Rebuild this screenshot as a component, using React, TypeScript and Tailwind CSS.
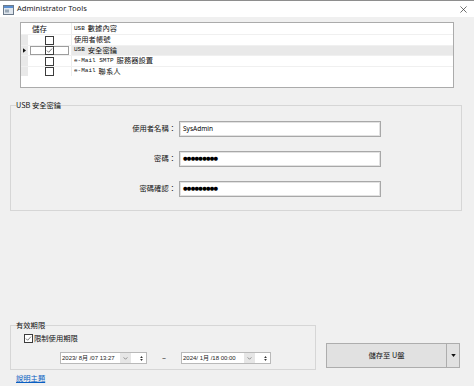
import React from 'react'

const ui = "font-['Noto_Sans','Noto_Sans_CJK_TC',sans-serif]"
const cjk = "font-['Noto_Sans_CJK_TC',sans-serif]"
const mono = "font-['Liberation_Mono','Noto_Sans_CJK_TC',monospace]"
const narrow = "font-['Liberation_Sans','Noto_Sans_CJK_TC',sans-serif]"

type Row = { key: string; latin?: string; text: string; checked?: boolean; selected?: boolean; h: string }

const rows: Row[] = [
  { key: 'acct', text: '使用者帳號', h: 'h-[11px]' },
  { key: 'usb', latin: 'USB', text: '安全密鑰', checked: true, selected: true, h: 'h-[10px]' },
  { key: 'smtp', latin: 'e-Mail SMTP', text: '服務器設置', h: 'h-[11px]' },
  { key: 'contact', latin: 'e-Mail', text: '聯系人', h: 'h-[10px]' },
]

function Check({ checked }: { checked?: boolean }) {
  return (
    <span className="flex h-[9px] w-[9px] items-center justify-center border border-[#3c3c3c] bg-white">
      {checked && (
        <svg viewBox="0 0 9 9" className="h-[7px] w-[7px]">
          <path d="M1.2 4.6 L3.4 6.8 L7.8 2" fill="none" stroke="#555" strokeWidth="1" />
        </svg>
      )}
    </span>
  )
}

function Label({ latin, text }: { latin?: string; text: string }) {
  return (
    <span className="flex items-center gap-[3px] whitespace-nowrap">
      {latin && <span className={`${mono} text-[6px]`}>{latin}</span>}
      <span className={`${cjk} text-[7.3px]`}>{text}</span>
    </span>
  )
}

function DataGrid() {
  return (
    <div className="mx-[20px] mt-[5px] h-[66px] border border-[#ababab] bg-white">
      <div className="flex h-[11px] items-center">
        <div className="w-[7px]" />
        <div className={`${cjk} w-[43px] pl-[4px] text-[7.5px] leading-none`}>儲存</div>
        <div className="flex h-full flex-1 items-center border-l border-[#ececec] pl-[2px]">
          <Label latin="USB" text="數據內容" />
        </div>
      </div>
      {rows.map((r) => (
        <div key={r.key} className={`flex ${r.h} items-stretch border-t border-[#f0f0f0]`}>
          <div className="flex w-[7px] items-center justify-center bg-[#e9e9e9]">
            {r.selected && (
              <svg viewBox="0 0 4 6" className="h-[5px] w-[3px]">
                <path d="M0 0 L4 3 L0 6 Z" fill="#111" />
              </svg>
            )}
          </div>
          <div className="flex w-[43px] items-center justify-center">
            <div
              className={`flex h-full items-center justify-center ${
                r.selected ? 'mx-[2px] w-[40px] border border-[#9d9d9d] bg-white' : 'w-full'
              }`}
            >
              <Check checked={r.checked} />
            </div>
          </div>
          <div
            className={`flex flex-1 items-center border-l border-[#ececec] pl-[2px] leading-none ${
              r.selected ? 'bg-[#e9e9e9]' : ''
            }`}
          >
            <Label latin={r.latin} text={r.text} />
          </div>
        </div>
      ))}
    </div>
  )
}

function Field({ label, value, secret }: { label: string; value: string; secret?: boolean }) {
  return (
    <div className="flex items-center">
      <div className={`${cjk} w-[165px] text-right text-[7.3px] leading-none`}>{label}</div>
      <div className="ml-[3px] flex h-[16px] w-[202px] items-center border border-[#a8a8a8] bg-white pl-[3px] shadow-[inset_0_0_0_1px_#e2e2e2]">
        {secret ? (
          <span className="font-['DejaVu_Sans',sans-serif] text-[5.2px] tracking-[-0.7px] text-black">{value}</span>
        ) : (
          <span className={`${ui} text-[6.5px] text-black`}>{value}</span>
        )}
      </div>
    </div>
  )
}

function DatePicker({ value, w }: { value: string; w: string }) {
  return (
    <div className={`flex h-[12px] ${w} items-center border border-[#b9b9b9] bg-white`}>
      <span className={`${narrow} flex-1 whitespace-nowrap pl-[1px] text-[6px] leading-none text-[#222]`}>{value}</span>
      <span className="flex h-full w-[11px] items-center justify-center bg-[#e6e6e6]">
        <svg viewBox="0 0 6 4" className="h-[3px] w-[5px]">
          <path d="M0.5 0.5 L3 3 L5.5 0.5" fill="none" stroke="#666" strokeWidth="0.9" />
        </svg>
      </span>
      <span className="ml-[6px] flex h-full w-[9px] flex-col items-center justify-center gap-[1px]">
        <svg viewBox="0 0 4 3" className="h-[2px] w-[3px]">
          <path d="M0 3 L2 0 L4 3 Z" fill="#333" />
        </svg>
        <svg viewBox="0 0 4 3" className="h-[2px] w-[3px]">
          <path d="M0 0 L4 0 L2 3 Z" fill="#333" />
        </svg>
      </span>
    </div>
  )
}

export default function App() {
  return (
    <div className={`${ui} flex h-[386px] w-[474px] flex-col overflow-hidden bg-[#f0f0f0] text-[#111]`}>
      <div className="flex h-[17px] shrink-0 items-center border-t border-[#8e8e8e] bg-white">
        <svg viewBox="0 0 11 11" className="ml-[3px] h-[11px] w-[11px]">
          <rect x="0.5" y="1.5" width="10" height="9" fill="#dfe6ee" stroke="#6c7a8a" />
          <rect x="1" y="2" width="9" height="2" fill="#5a8ed0" />
          <rect x="2" y="5.5" width="4" height="3" fill="#9aa8b6" />
        </svg>
        <span className="ml-[3px] text-[7.6px] leading-none text-[#222]">Administrator Tools</span>
        <svg viewBox="0 0 8 8" className="ml-auto mr-[7px] h-[7px] w-[7px]">
          <path d="M0.5 0.5 L7.5 7.5 M7.5 0.5 L0.5 7.5" stroke="#333" strokeWidth="0.8" />
        </svg>
      </div>

      <DataGrid />

      <fieldset className="ml-[10px] mt-[12px] w-[452px] border border-[#d6d6d6]">
        <legend className={`${cjk} ml-[5px] text-[7.3px] leading-[10px]`}>USB 安全密鑰</legend>
        <div className="flex flex-col gap-[14px] pb-[13px] pt-[11px]">
          <Field label="使用者名稱：" value="SysAdmin" />
          <Field label="密碼：" value="●●●●●●●●●" secret />
          <Field label="密碼確認：" value="●●●●●●●●●" secret />
        </div>
      </fieldset>

      <div className="mt-[109px] flex items-end">
        <fieldset className="ml-[10px] w-[306px] border border-[#d6d6d6]">
          <legend className={`${cjk} ml-[5px] text-[7.3px] leading-[10px]`}>有效期限</legend>
          <div className="ml-[13px] mt-[4px] flex h-[9px] items-center gap-[1px]">
            <Check checked />
            <span className={`${cjk} text-[7.3px] leading-none`}>限制使用期限</span>
          </div>
          <div className="ml-[49px] mt-[9px] flex items-center pb-[5px]">
            <DatePicker value="2023/ 8月 /07 13:27" w="w-[87px]" />
            <span className="w-[34px] text-center text-[7px] leading-none">~</span>
            <DatePicker value="2024/ 1月 /18 00:00" w="w-[90px]" />
          </div>
        </fieldset>
        <div className="mb-[2px] ml-[10px] flex h-[25px] w-[134px] border border-[#adadad] bg-[#e1e1e1]">
          <span className={`${cjk} flex flex-1 items-center justify-center text-[7.3px]`}>儲存至 U盤</span>
          <span className="flex w-[13px] items-center justify-center border-l border-[#adadad]">
            <svg viewBox="0 0 6 4" className="h-[3px] w-[5px]">
              <path d="M0 0 L6 0 L3 4 Z" fill="#111" />
            </svg>
          </span>
        </div>
      </div>

      <a className={`${cjk} ml-[16px] mt-[3px] w-fit text-[7.3px] leading-[10px] text-[#0a5fc2] underline`}>說明主題</a>
    </div>
  )
}
